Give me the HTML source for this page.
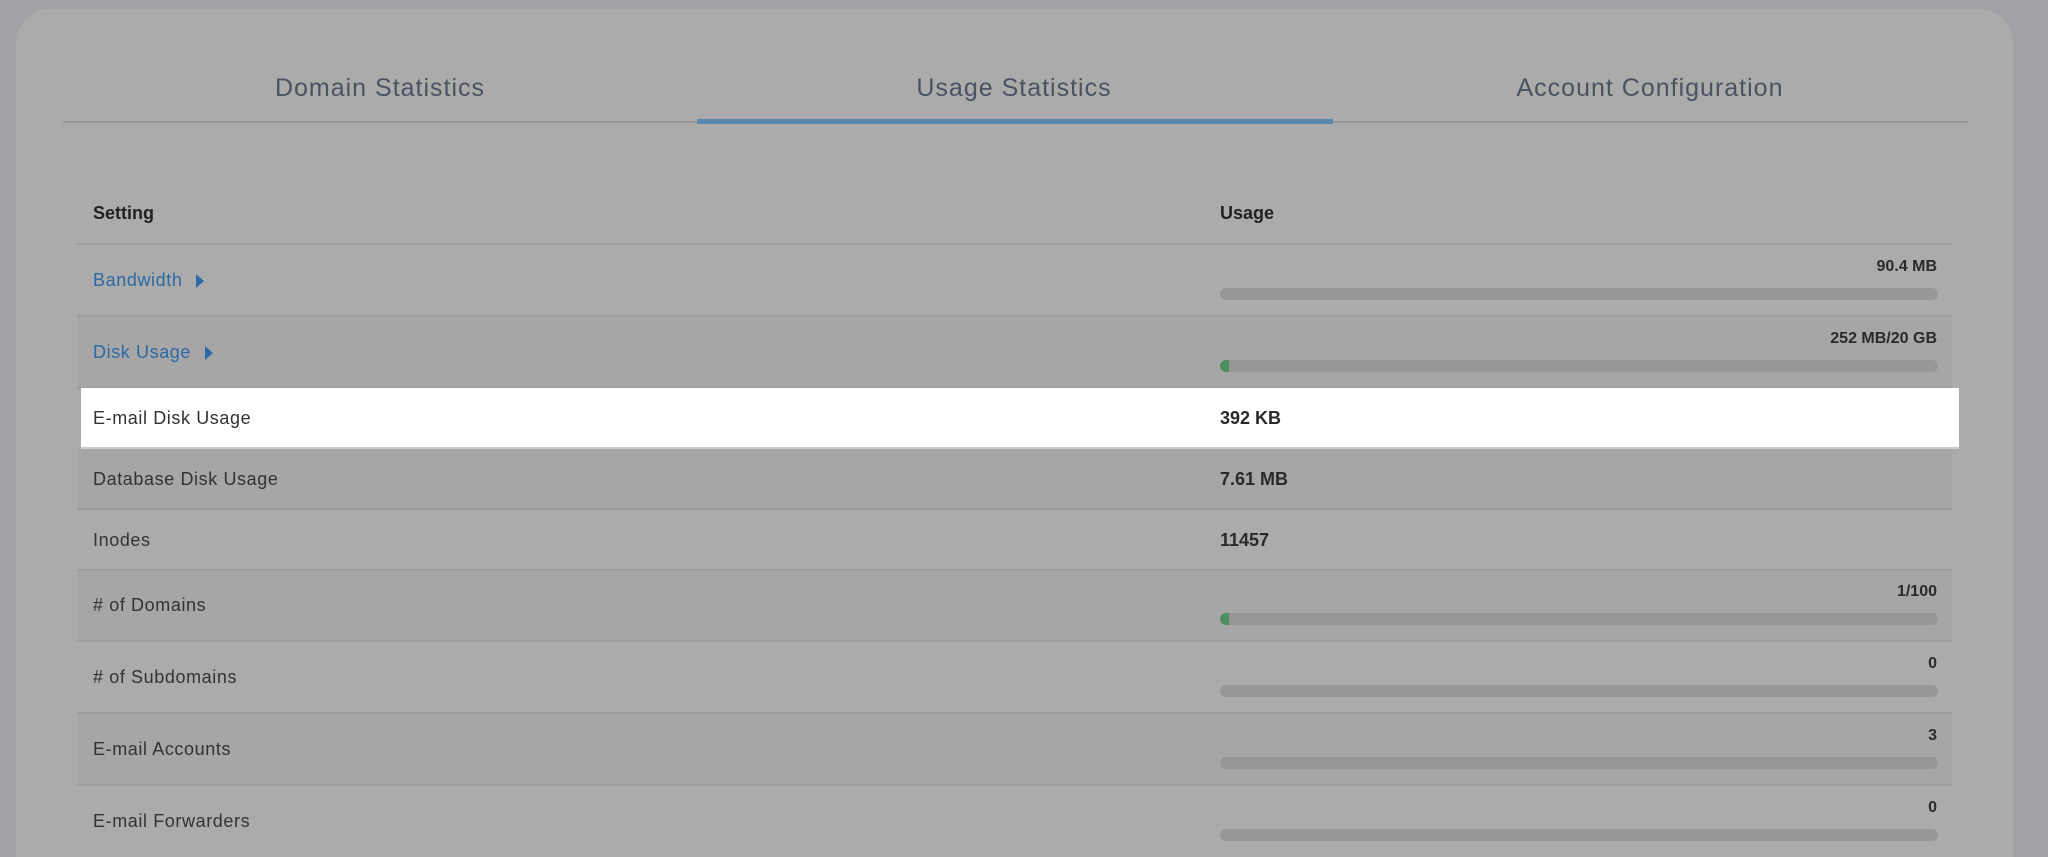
<!DOCTYPE html>
<html><head><meta charset="utf-8"><style>
*{margin:0;padding:0;box-sizing:border-box}
html,body{width:2048px;height:857px;overflow:hidden}
body{background:#a1a2a6;position:relative;font-family:"Liberation Sans",sans-serif}
.card{position:absolute;left:16px;top:9px;width:1997px;height:848px;background:#ababab;border-radius:34px 34px 0 0}
.tab{position:absolute;top:72px;font-size:25px;letter-spacing:1px;color:#4b5261;text-align:center;width:634px}
.tl{position:absolute;left:63px;top:121px;width:1905px;height:2px;background:#999}
.ta{position:absolute;left:697px;top:119px;width:636px;height:5px;background:#5a87ad}
.row{position:absolute;left:77px;width:1875px;border-bottom:2px solid #9d9d9d}
.dark{background:#a6a6a6}
.lbl{position:absolute;left:16px;font-size:18px;letter-spacing:0.6px;color:#333}
.val{position:absolute;left:1143px;font-size:18px;color:#2a2a2a;font-weight:bold}
.link{color:#2d69a5}
.rv{position:absolute;right:15px;font-size:16px;font-weight:bold;color:#2a2a2a}
.bar{position:absolute;left:1143px;width:718px;height:12px;border-radius:6px;background:#979797;overflow:hidden}
.bar i{position:absolute;left:0;top:0;width:9px;height:12px;background:#4e8e5e;border-radius:6px 0 0 6px}
.tri{display:inline-block;width:0;height:0;border-top:7px solid transparent;border-bottom:7px solid transparent;border-left:8px solid #2d69a5;margin-left:14px;vertical-align:-2px}
</style></head><body>
<div class="card"></div>
<div class="tab" style="left:63px;top:74px">Domain Statistics</div>
<div class="tab" style="left:697px;top:74px">Usage Statistics</div>
<div class="tab" style="left:1333px;top:74px">Account Configuration</div>
<div class="tl"></div><div class="ta"></div>

<div class="row" style="top:190px;height:55px">
 <div class="lbl" style="top:13px;font-weight:bold;color:#222;letter-spacing:0">Setting</div>
 <div class="val" style="top:13px;color:#222">Usage</div>
</div>
<div class="row" style="top:245px;height:72px">
 <div class="lbl link" style="top:25px">Bandwidth<span class="tri"></span></div>
 <div class="rv" style="top:13px">90.4 MB</div>
 <div class="bar" style="top:43px"></div>
</div>
<div class="row dark" style="top:317px;height:72px">
 <div class="lbl link" style="top:25px">Disk Usage<span class="tri"></span></div>
 <div class="rv" style="top:13px">252 MB/20 GB</div>
 <div class="bar" style="top:43px"><i></i></div>
</div>
<div class="row" style="top:388px;left:81px;width:1878px;height:61px;background:#fff;border-bottom:2px solid #ccc">
 <div class="lbl" style="top:20px;left:12px">E-mail Disk Usage</div>
 <div class="val" style="top:20px;left:1139px">392 KB</div>
</div>
<div class="row dark" style="top:449px;height:61px">
 <div class="lbl" style="top:20px">Database Disk Usage</div>
 <div class="val" style="top:20px">7.61 MB</div>
</div>
<div class="row" style="top:510px;height:61px">
 <div class="lbl" style="top:20px">Inodes</div>
 <div class="val" style="top:20px">11457</div>
</div>
<div class="row dark" style="top:571px;height:71px">
 <div class="lbl" style="top:24px"># of Domains</div>
 <div class="rv" style="top:12px">1/100</div>
 <div class="bar" style="top:42px"><i></i></div>
</div>
<div class="row" style="top:642px;height:72px">
 <div class="lbl" style="top:25px"># of Subdomains</div>
 <div class="rv" style="top:13px">0</div>
 <div class="bar" style="top:43px"></div>
</div>
<div class="row dark" style="top:714px;height:72px">
 <div class="lbl" style="top:25px">E-mail Accounts</div>
 <div class="rv" style="top:13px">3</div>
 <div class="bar" style="top:43px"></div>
</div>
<div class="row" style="top:786px;height:71px;border-bottom:none">
 <div class="lbl" style="top:25px">E-mail Forwarders</div>
 <div class="rv" style="top:13px">0</div>
 <div class="bar" style="top:43px"></div>
</div>
</body></html>
